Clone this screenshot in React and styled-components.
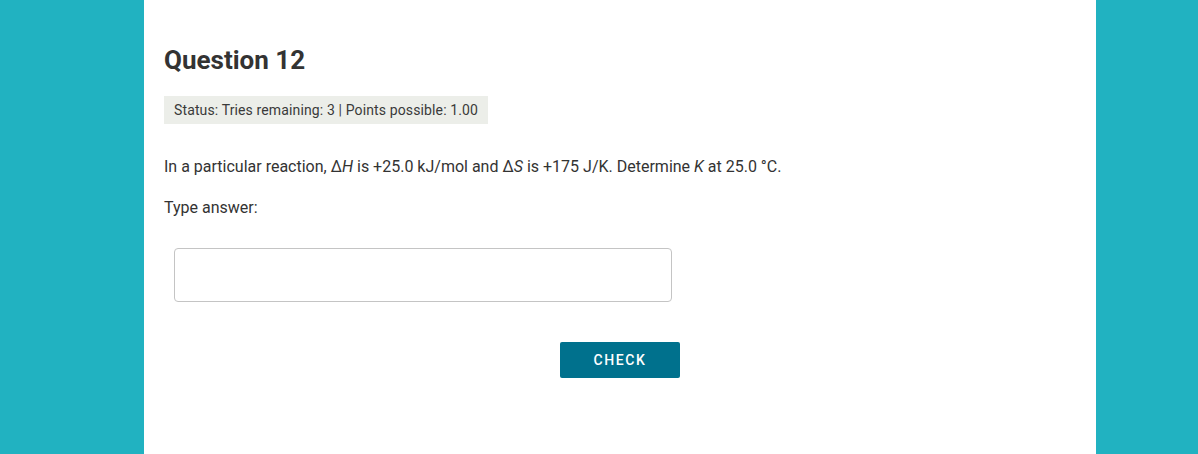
import styled, { createGlobalStyle } from 'styled-components'

const Global = createGlobalStyle`
  html, body {
    margin: 0;
    padding: 0;
    background: #21b2c1;
    font-family: Roboto, "Liberation Sans", sans-serif;
    color: #333;
  }
`

const Page = styled.div`
  display: grid;
  grid-template-columns: 144px 952px 1fr;
  min-height: 454px;
`

const Panel = styled.main`
  grid-column: 2;
  background: #fff;
  padding: 45px 20px 40px;
`

const Heading = styled.h2`
  margin: 0;
  font-size: 26px;
  line-height: 31px;
  font-weight: 700;
  color: #333;
`

const Status = styled.div`
  display: inline-block;
  margin-top: 20px;
  padding: 0 10px;
  height: 28px;
  line-height: 28px;
  font-size: 14px;
  letter-spacing: 0.13px;
  background: #eceee9;
  color: #3a3a3a;
`

const Text = styled.p`
  margin: ${({ $top }) => $top}px 0 0;
  font-size: 16px;
  line-height: 22px;
`

const Input = styled.input`
  display: block;
  box-sizing: border-box;
  margin: 29px 0 0 10px;
  width: 498px;
  height: 54px;
  border: 1px solid #c4c4c4;
  border-radius: 4px;
  font: inherit;
  outline: none;
`

const Actions = styled.div`
  display: flex;
  justify-content: center;
  margin-top: 40px;
`

const Button = styled.button`
  width: 120px;
  height: 36px;
  border: none;
  border-radius: 2px;
  background: #00718d;
  color: #fff;
  font-family: Roboto, "Liberation Sans", sans-serif;
  font-size: 14px;
  font-weight: 500;
  letter-spacing: 1.6px;
  text-transform: uppercase;
  cursor: pointer;
`

export default function App() {
  return (
    <>
      <Global />
      <Page>
        <Panel>
          <Heading>Question 12</Heading>
          <Status>Status: Tries remaining: 3 | Points possible: 1.00</Status>
          <Text $top={32}>
            In a particular reaction, Δ<i>H</i> is +25.0 kJ/mol and Δ<i>S</i> is +175 J/K. Determine <i>K</i> at 25.0 °C.
          </Text>
          <Text $top={19}>Type answer:</Text>
          <Input type="text" />
          <Actions>
            <Button>Check</Button>
          </Actions>
        </Panel>
      </Page>
    </>
  )
}
